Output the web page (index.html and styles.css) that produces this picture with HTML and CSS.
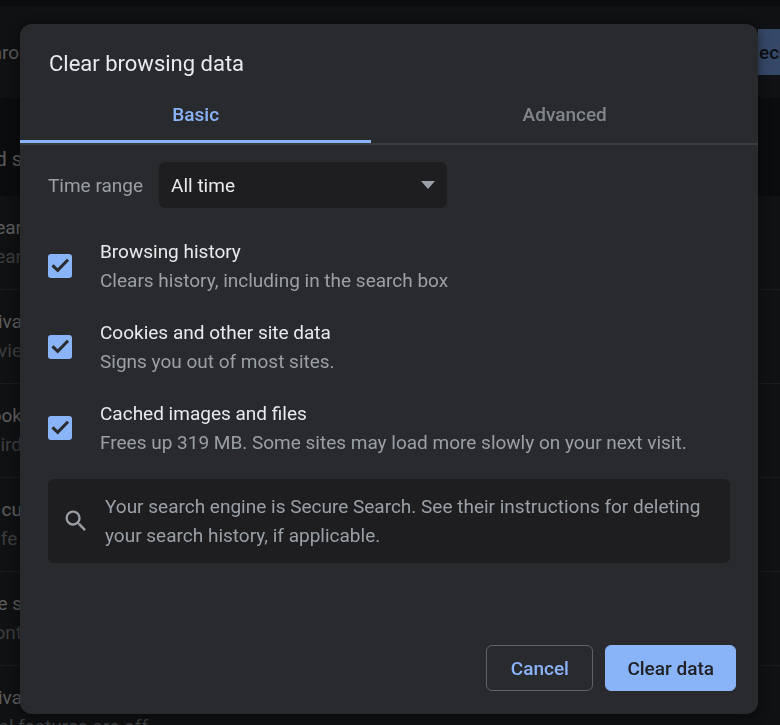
FILE: index.html
```html
<!DOCTYPE html>
<html lang="en">
<head>
<meta charset="utf-8">
<meta name="viewport" content="width=device-width, initial-scale=1">
<title>Clear browsing data</title>
<link rel="stylesheet" href="styles.css">
</head>
<body>
<div class="page" inert>
  <section class="banner"><span class="banner-text">hro</span><button class="banner-button" type="button">ech</button></section>
  <h2 class="section-title">d s</h2>
  <ul class="settings">
    <li class="setting"><span class="setting-title">ear</span><span class="setting-note">ear</span></li>
    <li class="setting"><span class="setting-title">iva</span><span class="setting-note">vie</span></li>
    <li class="setting"><span class="setting-title">ook</span><span class="setting-note">ird</span></li>
    <li class="setting"><span class="setting-title">cu</span><span class="setting-note">fe&nbsp;</span></li>
    <li class="setting"><span class="setting-title">te s</span><span class="setting-note">ont</span></li>
    <li class="setting"><span class="setting-title">iva</span><span class="setting-note wide">al features are off</span></li>
  </ul>
</div>
<div class="overlay">
  <form class="dialog" role="dialog" aria-labelledby="dialog-title">
    <h1 class="dialog-title" id="dialog-title">Clear browsing data</h1>
    <div class="tabs" role="tablist">
      <button class="tab selected" type="button" role="tab" aria-selected="true">Basic</button>
      <button class="tab" type="button" role="tab" aria-selected="false">Advanced</button>
    </div>
    <div class="dialog-body">
      <div class="range">
        <label for="range">Time range</label>
        <div class="select-wrap">
          <select id="range"><option>All time</option></select>
        </div>
      </div>
      <div class="options">
        <label class="option">
          <input type="checkbox" checked>
          <svg class="tick" viewBox="0 0 24 24" aria-hidden="true"><path d="M4.5 11.3l5.2 5L20 5.8"/></svg>
          <span class="option-text"><span class="option-title">Browsing history</span><span class="option-note">Clears history, including in the search box</span></span>
        </label>
        <label class="option">
          <input type="checkbox" checked>
          <svg class="tick" viewBox="0 0 24 24" aria-hidden="true"><path d="M4.5 11.3l5.2 5L20 5.8"/></svg>
          <span class="option-text"><span class="option-title">Cookies and other site data</span><span class="option-note">Signs you out of most sites.</span></span>
        </label>
        <label class="option">
          <input type="checkbox" checked>
          <svg class="tick" viewBox="0 0 24 24" aria-hidden="true"><path d="M4.5 11.3l5.2 5L20 5.8"/></svg>
          <span class="option-text"><span class="option-title">Cached images and files</span><span class="option-note">Frees up 319 MB. Some sites may load more slowly on your next visit.</span></span>
        </label>
      </div>
      <div class="info">
        <svg class="search-icon" viewBox="0 0 24 24" aria-hidden="true"><path d="M15.5 14h-.79l-.28-.27A6.471 6.471 0 0 0 16 9.5 6.5 6.5 0 1 0 9.5 16c1.61 0 3.09-.59 4.23-1.57l.27.28v.79l5 4.99L20.49 19l-4.99-5zm-6 0C7.01 14 5 11.99 5 9.5S7.01 5 9.5 5 14 7.01 14 9.5 11.99 14 9.5 14z"/></svg>
        <p>Your search engine is Secure Search. See their instructions for deleting your search history, if applicable.</p>
      </div>
    </div>
    <div class="actions">
      <button class="button" type="button">Cancel</button>
      <button class="button primary" type="button">Clear data</button>
    </div>
  </form>
</div>
</body>
</html>
```
FILE: styles.css
```css
* {
  box-sizing: border-box;
}

html,
body {
  height: 100%;
}

body {
  margin: 0;
  overflow: hidden;
  background: #0b0c0e;
  color: #e8eaed;
  font: 19px/29px Roboto, "Liberation Sans", sans-serif;
}

button,
select {
  font: inherit;
}

/* Dimmed settings page behind the dialog */
.page {
  height: 100%;
  overflow: hidden;
  padding-top: 6px;
}

.banner {
  display: flex;
  align-items: center;
  justify-content: space-between;
  height: 92px;
  background: #101113;
  color: #59595a;
}

.banner-text,
.setting-title,
.setting-note {
  display: flex;
  justify-content: flex-end;
  width: 22px;
  white-space: nowrap;
}

.banner-text {
  width: 19px;
}

.banner-button {
  height: 46px;
  padding: 0 1px;
  width: 22px;
  border: 0;
  background: #364868;
  color: #0e0f11;
  font-weight: 500;
  text-align: left;
  overflow: hidden;
}

.section-title {
  display: flex;
  align-items: center;
  justify-content: flex-end;
  width: 22px;
  height: 98px;
  margin: 0;
  padding-top: 24px;
  color: #59595a;
  font-size: 20px;
  font-weight: 400;
  white-space: nowrap;
}

.settings {
  margin: 0;
  padding: 0;
  list-style: none;
  background: #101113;
}

.setting {
  height: 94px;
  padding-top: 17px;
  border-bottom: 1px solid #1a1b1d;
  color: #5c5d5e;
}

.setting-note {
  color: #3b3d3f;
}

.setting-note.wide {
  width: 148px;
}

/* Dialog */
.overlay {
  position: fixed;
  inset: 0;
  display: flex;
  align-items: flex-start;
  padding: 24px 22px 0 20px;
}

.dialog {
  flex: 1;
  padding-bottom: 23px;
  border-radius: 12px;
  background: #292a2d;
  box-shadow: 0 2px 12px rgba(0, 0, 0, 0.5);
}

.dialog-title {
  margin: 0;
  padding: 25px 29px 11px;
  font-size: 22px;
  font-weight: 400;
  line-height: 30px;
}

.tabs {
  display: flex;
  border-bottom: 2px solid #3a3b3e;
}

.tab {
  flex: 11;
  height: 53px;
  padding: 0 0 2px;
  border: 0;
  border-bottom: 3px solid transparent;
  background: none;
  color: #80868b;
  font-weight: 500;
}

.tab.selected {
  flex: 10;
  border-color: #8ab4f8;
  color: #8ab4f8;
}

.dialog-body {
  padding: 17px 28px 0;
}

.range {
  display: flex;
  align-items: center;
  gap: 16px;
  color: #9aa0a6;
}

.select-wrap {
  position: relative;
  width: 288px;
}

.select-wrap::after {
  content: "";
  position: absolute;
  top: 19px;
  right: 12px;
  border: 7px solid transparent;
  border-top: 8px solid #9aa0a6;
  border-bottom: 0;
  pointer-events: none;
}

select {
  width: 100%;
  height: 46px;
  padding: 0 12px;
  border: 0;
  border-radius: 6px;
  appearance: none;
  background: #1e1e20;
  color: #e8eaed;
}

.options {
  display: flex;
  flex-direction: column;
  gap: 23px;
  padding: 29px 0 22px;
}

.option {
  display: grid;
  grid-template-columns: 24px 1fr;
  column-gap: 28px;
  align-items: center;
}

.option input {
  grid-area: 1 / 1;
  width: 24px;
  height: 24px;
  margin: 0;
  border-radius: 3px;
  appearance: none;
  background: #8ab4f8;
}

.tick {
  grid-area: 1 / 1;
  width: 24px;
  height: 24px;
  fill: none;
  stroke: #292a2d;
  stroke-width: 3;
}

.option-text {
  grid-area: 1 / 2;
}

.option-title,
.option-note {
  display: block;
}

.option-note {
  color: #9aa0a6;
}

.info {
  display: flex;
  align-items: center;
  gap: 15px;
  padding: 13px 14px;
  border-radius: 6px;
  background: #1e1e20;
  color: #9aa0a6;
}

.info p {
  margin: 0;
}

.search-icon {
  flex: none;
  width: 28px;
  height: 28px;
  fill: #9aa0a6;
}

.actions {
  display: flex;
  justify-content: flex-end;
  gap: 12px;
  padding: 82px 22px 0;
}

.button {
  min-width: 107px;
  height: 46px;
  padding: 0 21px;
  border: 1px solid #5f6368;
  border-radius: 6px;
  background: none;
  color: #8ab4f8;
  font-weight: 500;
}

.button.primary {
  border-color: #8ab4f8;
  background: #8ab4f8;
  color: #202124;
}
```
